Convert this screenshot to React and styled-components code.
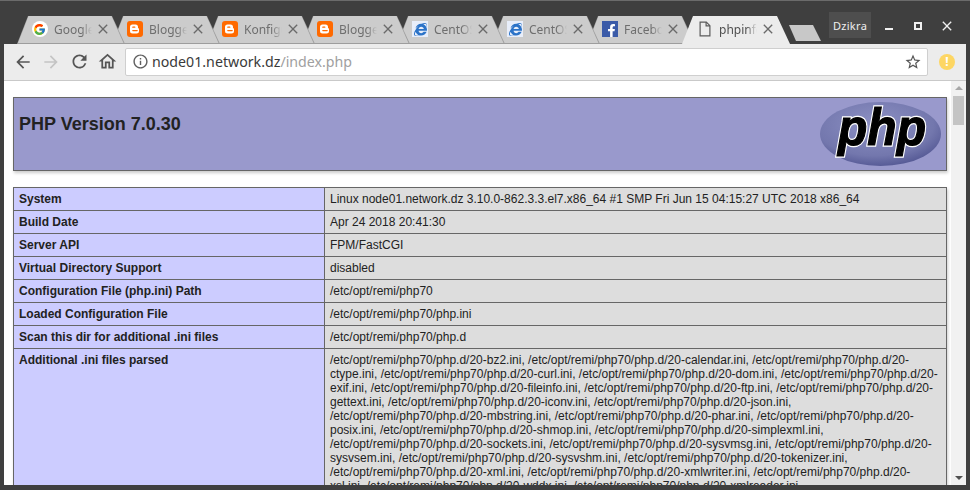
import React from "react";
import styled, { createGlobalStyle } from "styled-components";
import { FcGoogle } from "react-icons/fc";
import { FaFacebookF, FaInternetExplorer } from "react-icons/fa";
import {
  MdArrowBack,
  MdArrowForward,
  MdRefresh,
  MdOutlineHome,
  MdInfoOutline,
  MdStarBorder,
  MdClose,
} from "react-icons/md";

const D = "/etc/opt/remi/php70/php.d/20-";
const iniFiles = [
  "bz2", "calendar", "ctype", "curl", "dom", "exif", "fileinfo", "ftp", "gettext",
  "iconv", "json", "mbstring", "phar", "posix", "shmop", "simplexml", "sockets",
  "sysvmsg", "sysvsem", "sysvshm", "tokenizer", "xml", "xmlwriter", "xsl", "wddx", "xmlreader",
];

const rows = [
  ["System", "Linux node01.network.dz 3.10.0-862.3.3.el7.x86_64 #1 SMP Fri Jun 15 04:15:27 UTC 2018 x86_64"],
  ["Build Date", "Apr 24 2018 20:41:30"],
  ["Server API", "FPM/FastCGI"],
  ["Virtual Directory Support", "disabled"],
  ["Configuration File (php.ini) Path", "/etc/opt/remi/php70"],
  ["Loaded Configuration File", "/etc/opt/remi/php70/php.ini"],
  ["Scan this dir for additional .ini files", "/etc/opt/remi/php70/php.d"],
  ["Additional .ini files parsed", iniFiles.map((f) => `${D}${f}.ini`).join(", ") + ","],
];

const GoogleIcon = () => (
  <GoogleBadge>
    <FcGoogle size={13} />
  </GoogleBadge>
);

const BloggerIcon = () => (
  <svg width="16" height="16" viewBox="0 0 16 16">
    <rect width="16" height="16" rx="3" fill="#ff6a00" />
    <path d="M5.5 3.5h3a2.5 2.5 0 0 1 2.5 2.5v.8c0 .4.3.7.7.7h.3v2.5a2.5 2.5 0 0 1-2.5 2.5h-4A2.5 2.5 0 0 1 3 10V6a2.5 2.5 0 0 1 2.5-2.5z" fill="#fff" />
    <rect x="5.2" y="5.6" width="3.2" height="1.2" rx=".6" fill="#ff6a00" />
    <rect x="5.2" y="9" width="5.6" height="1.2" rx=".6" fill="#ff6a00" />
  </svg>
);

const CentIcon = () => (
  <IconPage>
    <FaInternetExplorer size={13} color="#2b73c8" />
  </IconPage>
);

const FacebookIcon = () => (
  <FbBox>
    <FaFacebookF size={13} color="#fff" />
  </FbBox>
);

const PageIcon = () => (
  <svg width="16" height="16" viewBox="0 0 16 16" fill="none" stroke="#5a5a5a" strokeWidth="1.2">
    <path d="M3.1 1.1h6.2l3.6 3.6v10.2H3.1z" />
    <path d="M9.1 1.1v3.8h3.8" />
  </svg>
);

const tabs = [
  { title: "Google", icon: <GoogleIcon /> },
  { title: "Blogger", icon: <BloggerIcon /> },
  { title: "Konfigurasi", icon: <BloggerIcon /> },
  { title: "Blogger", icon: <BloggerIcon /> },
  { title: "CentOS", icon: <CentIcon /> },
  { title: "CentOS", icon: <CentIcon /> },
  { title: "Facebook", icon: <FacebookIcon /> },
  { title: "phpinfo()", icon: <PageIcon />, active: true },
];

const PhpLogo = () => (
  <svg width="121" height="64" viewBox="0 0 121 64">
    <defs>
      <radialGradient id="phpBg" cx="45%" cy="35%" r="70%">
        <stop offset="0%" stopColor="#8d91c4" />
        <stop offset="70%" stopColor="#7377ad" />
        <stop offset="100%" stopColor="#4f5390" />
      </radialGradient>
    </defs>
    <ellipse cx="60.5" cy="32" rx="60.5" ry="32" fill="url(#phpBg)" />
    <LogoText x="62" y="43" textLength="88" lengthAdjust="spacingAndGlyphs" stroke="#fff" strokeWidth="3.6">
      php
    </LogoText>
    <LogoText x="62" y="43" textLength="88" lengthAdjust="spacingAndGlyphs" stroke="#000" strokeWidth="1.2">
      php
    </LogoText>
  </svg>
);

export default function App() {
  return (
    <>
      <GlobalStyle />
      <Window>
        <TitleBar>
          <TabStrip>
            {tabs.map((tab, i) => (
              <Tab key={i} $active={tab.active} $order={tabs.length - i}>
                <Favicon>{tab.icon}</Favicon>
                <TabTitle $active={tab.active}>{tab.title}</TabTitle>
                <TabClose $active={tab.active}>
                  <MdClose size={16} />
                </TabClose>
              </Tab>
            ))}
            <NewTab />
          </TabStrip>
          <Profile>Dzikra</Profile>
          <WinControls>
            <MinIcon />
            <MaxIcon />
            <CloseIcon />
          </WinControls>
        </TitleBar>

        <Toolbar>
          <NavButton><MdArrowBack size={20} /></NavButton>
          <NavButton $disabled><MdArrowForward size={20} /></NavButton>
          <NavButton><MdRefresh size={21} /></NavButton>
          <NavButton><MdOutlineHome size={21} /></NavButton>
          <Omnibox>
            <MdInfoOutline size={17} color="#5f5f5f" />
            <Url>
              node01.network.dz<UrlPath>/index.php</UrlPath>
            </Url>
            <MdStarBorder size={18} color="#555" />
          </Omnibox>
          <Warning>!</Warning>
        </Toolbar>

        <Viewport>
          <Page>
            <Header>
              <Title>PHP Version 7.0.30</Title>
              <PhpLogo />
            </Header>
            <Table>
              <colgroup>
                <col width="311" />
                <col />
              </colgroup>
              <tbody>
                {rows.map(([key, value]) => (
                  <tr key={key}>
                    <KeyCell>{key}</KeyCell>
                    <ValueCell>{value}</ValueCell>
                  </tr>
                ))}
              </tbody>
            </Table>
          </Page>
          <Scrollbar>
            <ArrowUp />
            <Thumb />
            <ScrollSpace />
            <ArrowDown />
          </Scrollbar>
        </Viewport>
      </Window>
    </>
  );
}

// STYLING

const GlobalStyle = createGlobalStyle`
  html, body {
    margin: 0;
    height: 490px;
    overflow: hidden;
    background: #3b3b3b;
  }
`;

const Window = styled.div`
  width: 970px;
  height: 490px;
  box-sizing: border-box;
  padding: 0 4px 5px 4px;
  background: #3f3f3f;
  border-top: 1px solid #6b6b6b;
  display: flex;
  flex-direction: column;
  font-family: "Noto Sans", sans-serif;
`;

const TitleBar = styled.div`
  height: 43px;
  flex: none;
  display: flex;
  align-items: flex-start;
`;

const TabStrip = styled.div`
  display: flex;
  padding: 15px 0 0 13px;
  height: 43px;
  box-sizing: border-box;
`;

const Tab = styled.div`
  width: 108px;
  height: 28px;
  margin-right: -13px;
  flex: none;
  box-sizing: border-box;
  padding: 0 0 2px 15px;
  display: flex;
  align-items: center;
  position: relative;
  z-index: ${(p) => (p.$active ? 50 : p.$order)};
  background: ${(p) => (p.$active ? "#ececec" : "#9d9d9d")};
  clip-path: polygon(0 100%, 11px 0, 95px 0, 108px 100%);

  &::before {
    content: "";
    position: absolute;
    inset: 0 0 1px 0;
    background: ${(p) => (p.$active ? "#ececec" : "#cccccc")};
    clip-path: polygon(1px 100%, 11.5px 0, 94.5px 0, 106.5px 100%);
  }
`;

const Favicon = styled.span`
  width: 16px;
  height: 16px;
  flex: none;
  position: relative;
  display: flex;
  align-items: center;
  justify-content: center;
`;

const GoogleBadge = styled.span`
  width: 16px;
  height: 16px;
  margin-left: -1px;
  flex: none;
  border-radius: 50%;
  background: #fff;
  display: flex;
  align-items: center;
  justify-content: center;
`;

const IconPage = styled.span`
  width: 16px;
  height: 16px;
  background: #e8eefa;
  display: flex;
  align-items: center;
  justify-content: center;
`;

const FbBox = styled.span`
  width: 16px;
  height: 16px;
  background: #3b5ba8;
  display: flex;
  align-items: flex-end;
  justify-content: flex-end;
  overflow: hidden;
`;

const TabTitle = styled.span`
  position: relative;
  margin-left: 6px;
  width: 38px;
  font-size: 12px;
  white-space: nowrap;
  overflow: hidden;
  color: ${(p) => (p.$active ? "#4f4f4f" : "#6e6e6e")};
  mask-image: linear-gradient(to right, #000 72%, transparent 100%);
`;

const TabClose = styled.span`
  position: relative;
  margin-left: 3px;
  display: flex;
  color: #6a6a6a;
`;

const NewTab = styled.div`
  width: 32px;
  height: 16px;
  margin: 9px 0 0 12px;
  flex: none;
  background: #c8c8c8;
  clip-path: polygon(0 0, 24px 0, 32px 100%, 7px 100%);
`;

const Profile = styled.div`
  width: 42px;
  height: 26px;
  margin: 11px 0 0 8px;
  flex: none;
  background: #4e4e4e;
  color: #eeeeee;
  font-size: 11px;
  letter-spacing: 0.3px;
  display: flex;
  align-items: center;
  justify-content: center;
`;

const WinControls = styled.div`
  display: flex;
  align-items: center;
  margin: 15px 0 0 14px;
  height: 19px;
`;

const MinIcon = styled.span`
  width: 8px;
  height: 2px;
  margin-top: 7px;
  background: #f0f0f0;
`;

const MaxIcon = styled.span`
  width: 8px;
  height: 8px;
  margin-left: 21px;
  box-sizing: border-box;
  border: 2px solid #f0f0f0;
`;

const CloseIcon = styled(MdClose).attrs({ size: 16, color: "#f0f0f0" })`
  margin-left: 17px;
`;

const Toolbar = styled.div`
  height: 37px;
  flex: none;
  box-sizing: border-box;
  background: #ececec;
  border-bottom: 1px solid #c9c9c9;
  display: flex;
  align-items: center;
  padding: 0 10px 1px 5px;
`;

const NavButton = styled.span`
  width: 28px;
  height: 24px;
  flex: none;
  display: flex;
  align-items: center;
  justify-content: center;
  color: ${(p) => (p.$disabled ? "#c4c4c4" : "#555555")};
`;

const Omnibox = styled.div`
  width: 803px;
  height: 28px;
  margin-left: 4px;
  box-sizing: border-box;
  flex: none;
  display: flex;
  align-items: center;
  padding: 0 5px 0 6px;
  background: #fff;
  border: 1px solid #cfcfcf;
  border-radius: 2px;
`;

const Url = styled.div`
  flex: 1;
  margin-left: 3px;
  font-size: 14.2px;
  color: #3a3a3a;
  white-space: nowrap;
`;

const UrlPath = styled.span`
  color: #a0a0a0;
`;

const Warning = styled.div`
  width: 16px;
  height: 16px;
  margin-left: 11px;
  flex: none;
  border-radius: 50%;
  background: #fdd663;
  color: #fff;
  font-size: 12px;
  font-weight: 700;
  display: flex;
  align-items: center;
  justify-content: center;
`;

const Viewport = styled.div`
  flex: 1;
  min-height: 0;
  display: flex;
  background: #fff;
`;

const Page = styled.div`
  flex: 1;
  min-width: 0;
  overflow: hidden;
  padding: 16px 4px 0 9px;
  font-family: "Liberation Sans", Arial, sans-serif;
  font-size: 12px;
  color: #222;
`;

const Header = styled.div`
  height: 74px;
  box-sizing: border-box;
  background: #9999cc;
  border: 1px solid #666;
  box-shadow: 1px 2px 3px #ccc;
  padding: 4px 5px 0 5px;
  display: flex;
  align-items: flex-start;
  justify-content: space-between;
`;

const Title = styled.h1`
  margin: 12px 0 0 0;
  font-size: 18px;
  font-weight: 700;
  line-height: 21px;
`;

const LogoText = styled.text`
  font-family: "Liberation Sans", sans-serif;
  font-weight: 700;
  font-style: italic;
  font-size: 52px;
  text-anchor: middle;
  fill: #000;
`;

const Table = styled.table`
  margin-top: 16px;
  width: 100%;
  table-layout: fixed;
  border-collapse: collapse;
  box-shadow: 1px 2px 3px #ccc;
`;

const KeyCell = styled.td`
  background: #ccccff;
  border: 1px solid #666;
  padding: 4px 5px;
  vertical-align: baseline;
  font-weight: 700;
  line-height: 14px;
`;

const ValueCell = styled.td`
  background: #dddddd;
  border: 1px solid #666;
  padding: 4px 5px;
  vertical-align: baseline;
  line-height: 14px;
  word-break: normal;
`;

const Scrollbar = styled.div`
  width: 15px;
  flex: none;
  background: #f1f1f1;
  display: flex;
  flex-direction: column;
  align-items: center;
`;

const ArrowUp = styled.div`
  margin-top: 5px;
  width: 0;
  height: 0;
  border-left: 4px solid transparent;
  border-right: 4px solid transparent;
  border-bottom: 4px solid #a8a8a8;
`;

const Thumb = styled.div`
  margin-top: 6px;
  width: 11px;
  height: 29px;
  background: #c4c4c4;
`;

const ScrollSpace = styled.div`
  flex: 1;
`;

const ArrowDown = styled.div`
  margin-bottom: 5px;
  width: 0;
  height: 0;
  border-left: 4px solid transparent;
  border-right: 4px solid transparent;
  border-top: 4px solid #505050;
`;
